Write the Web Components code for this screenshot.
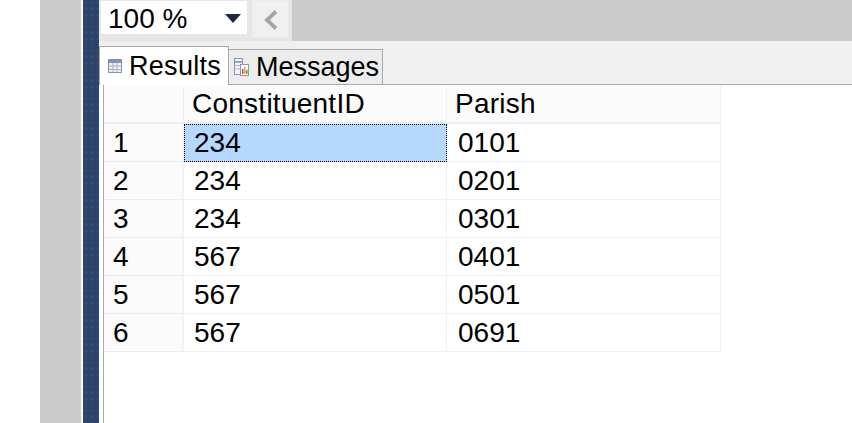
<!DOCTYPE html>
<html>
<head>
<meta charset="utf-8">
<style>
  html, body { margin: 0; height: 100%; background: #fff; overflow: hidden; }
  body { font-family: "Liberation Sans", Arial, sans-serif; color: #000; }
</style>
</head>
<body>
<ssms-window>
  <zoom-bar value="100 %"></zoom-bar>
  <result-tabs></result-tabs>
  <result-grid></result-grid>
</ssms-window>

<script>
const windowTpl = document.createElement('template');
windowTpl.innerHTML = `
  <style>
    :host { display: flex; width: 852px; height: 423px; overflow: hidden; }
    .gutter { width: 40px; flex: none; background: #fff; }
    .side { width: 41px; flex: none; background: #cccccc; margin-right: 1px; border-right: 1px solid #f4f4f4; }
    .rail {
      width: 16px; flex: none; background-color: #2e436b;
      background-image: radial-gradient(circle, #374d76 1.2px, transparent 1.6px);
      background-size: 6px 6px;
    }
    .main { flex: 1; display: flex; flex-direction: column; min-width: 0; }
  </style>
  <div class="gutter"></div>
  <div class="side"></div>
  <div class="rail"></div>
  <div class="main"><slot></slot></div>
`;
class SsmsWindow extends HTMLElement {
  constructor() {
    super();
    this.attachShadow({mode: 'open'});
    this.shadowRoot.appendChild(windowTpl.content.cloneNode(true));
  }
}
customElements.define('ssms-window', SsmsWindow);

const zoomTpl = document.createElement('template');
zoomTpl.innerHTML = `
  <style>
    :host { display: flex; height: 41px; flex: none; background: #cccccc; }
    .tools { width: 193px; display: flex; align-items: flex-start; gap: 5px; padding-left: 2px; box-sizing: border-box; background: #e6e6e6; }
    .combo {
      width: 146px; height: 33px; margin-top: 1px; background: #fff; box-sizing: border-box;
      display: flex; align-items: center; justify-content: space-between;
      padding: 2px 6px 0 7px; font-size: 28px; line-height: 31px;
    }
    .combo svg { display: block; }
    .back {
      width: 37px; height: 38px; box-sizing: border-box; background: #f0f0f0; border: 1px solid #ebebeb;
      display: flex; align-items: center; justify-content: center; padding-top: 2px;
    }
  </style>
  <div class="tools">
    <div class="combo">
      <span id="val"></span>
      <svg width="16" height="9" viewBox="0 0 16 9"><path d="M0 0H16L8 9Z" fill="#1b2a41"/></svg>
    </div>
    <div class="back">
      <svg width="14" height="20" viewBox="0 0 14 20"><path d="M12 1.500 3 10l9 8.500" fill="none" stroke="#a5a5a5" stroke-width="3.800"/></svg>
    </div>
  </div>
`;
class ZoomBar extends HTMLElement {
  constructor() {
    super();
    this.attachShadow({mode: 'open'});
    this.shadowRoot.appendChild(zoomTpl.content.cloneNode(true));
    this.shadowRoot.getElementById('val').textContent = this.getAttribute('value');
  }
}
customElements.define('zoom-bar', ZoomBar);

const tabsTpl = document.createElement('template');
tabsTpl.innerHTML = `
  <style>
    :host { display: flex; align-items: flex-end; height: 44px; flex: none; background: #f0f0f0; border-bottom: 1px solid #aaaaaa; box-sizing: border-box; font-size: 27px; }
    .tab { display: flex; align-items: center; box-sizing: border-box; border: 1px solid #aaaaaa; border-bottom: 0; }
    .on { width: 130px; height: 39px; background: #fff; padding-left: 8px; gap: 7px; margin-bottom: -1px; position: relative; }
    .on span { letter-spacing: .3px; }
    .off { width: 154px; height: 35px; background: #ececec; padding-left: 5px; gap: 7px; border-left: 0; }
    svg { display: block; flex: none; }
  </style>
  <div class="tab on">
    <svg width="14" height="14" viewBox="0 0 14 14">
      <rect x=".5" y=".5" width="13" height="13" fill="#eef1f7" stroke="#8791ab"/>
      <rect x="1" y="1" width="12" height="3" fill="#7d93c4"/>
      <path d="M1 7h12M1 10.500h12M5 4v9M9 4v9" stroke="#aab1c0"/>
    </svg>
    <span>Results</span>
  </div>
  <div class="tab off">
    <svg width="15" height="18" viewBox="0 0 15 18">
      <rect x=".5" y=".5" width="8" height="16" fill="#f2f4f8" stroke="#8d96aa"/>
      <rect x="1" y="3" width="7" height="2" fill="#8fa8d2"/>
      <path d="M1 7.500h7M1 11h7" stroke="#b0b8c8"/>
      <rect x="6.500" y="6.500" width="8" height="11" fill="#fff" stroke="#8d96aa"/>
      <rect x="8" y="11" width="1.500" height="5" fill="#d9483b"/>
      <rect x="10" y="9" width="1.500" height="7" fill="#e6a93a"/>
      <rect x="12" y="12" width="1.500" height="4" fill="#4a9c4e"/>
    </svg>
    <span>Messages</span>
  </div>
`;
class ResultTabs extends HTMLElement {
  constructor() {
    super();
    this.attachShadow({mode: 'open'});
    this.shadowRoot.appendChild(tabsTpl.content.cloneNode(true));
  }
}
customElements.define('result-tabs', ResultTabs);

const gridRows = [
  ['234', '0101'], ['234', '0201'], ['234', '0301'],
  ['567', '0401'], ['567', '0501'], ['567', '0691']
];

const gridTpl = document.createElement('template');
gridTpl.innerHTML = `
  <style>
    :host { display: block; flex: 1; margin-left: 4px; border-left: 1px solid #aaaaaa; padding-top: 1px; background: #fff; font-size: 28px; }
    .grid { display: grid; grid-template-columns: 80px 263px 274px; grid-auto-rows: 38px; width: 617px; }
    .c { box-sizing: border-box; display: flex; align-items: center; padding-left: 10px; border-right: 1px solid #eef1f6; border-bottom: 1px solid #eef1f6; line-height: 1; }
    .v { padding-left: 11px; }
    .h { background: #fbfbfc; border-right: 1px solid #ecf1f8; border-bottom: 2px solid #e8eef7; padding-left: 8px; height: 38px; padding-bottom: 1px; letter-spacing: .25px; }
    .n { background: #fbfbfc; border-right: 2px solid #f0f3f8; border-bottom: 1px solid #e8eef7; padding-left: 9px; }
    .sel { background: #b5d8ff; outline: 1px dotted #000; outline-offset: -1px; border: 0; }
  </style>
  <div class="grid" id="g">
    <div class="c h"></div>
    <div class="c h"><span>ConstituentID</span></div>
    <div class="c h">Parish</div>
  </div>
`;
class ResultGrid extends HTMLElement {
  constructor() {
    super();
    this.attachShadow({mode: 'open'});
    this.shadowRoot.appendChild(gridTpl.content.cloneNode(true));
    const g = this.shadowRoot.getElementById('g');
    gridRows.forEach((r, i) => {
      const cells = [[String(i + 1), 'c n'], [r[0], i === 0 ? 'c sel' : 'c'], [r[1], 'c v']];
      cells.forEach(([t, cls]) => {
        const d = document.createElement('div');
        d.className = cls;
        d.textContent = t;
        g.appendChild(d);
      });
    });
  }
}
customElements.define('result-grid', ResultGrid);
</script>
</body>
</html>
